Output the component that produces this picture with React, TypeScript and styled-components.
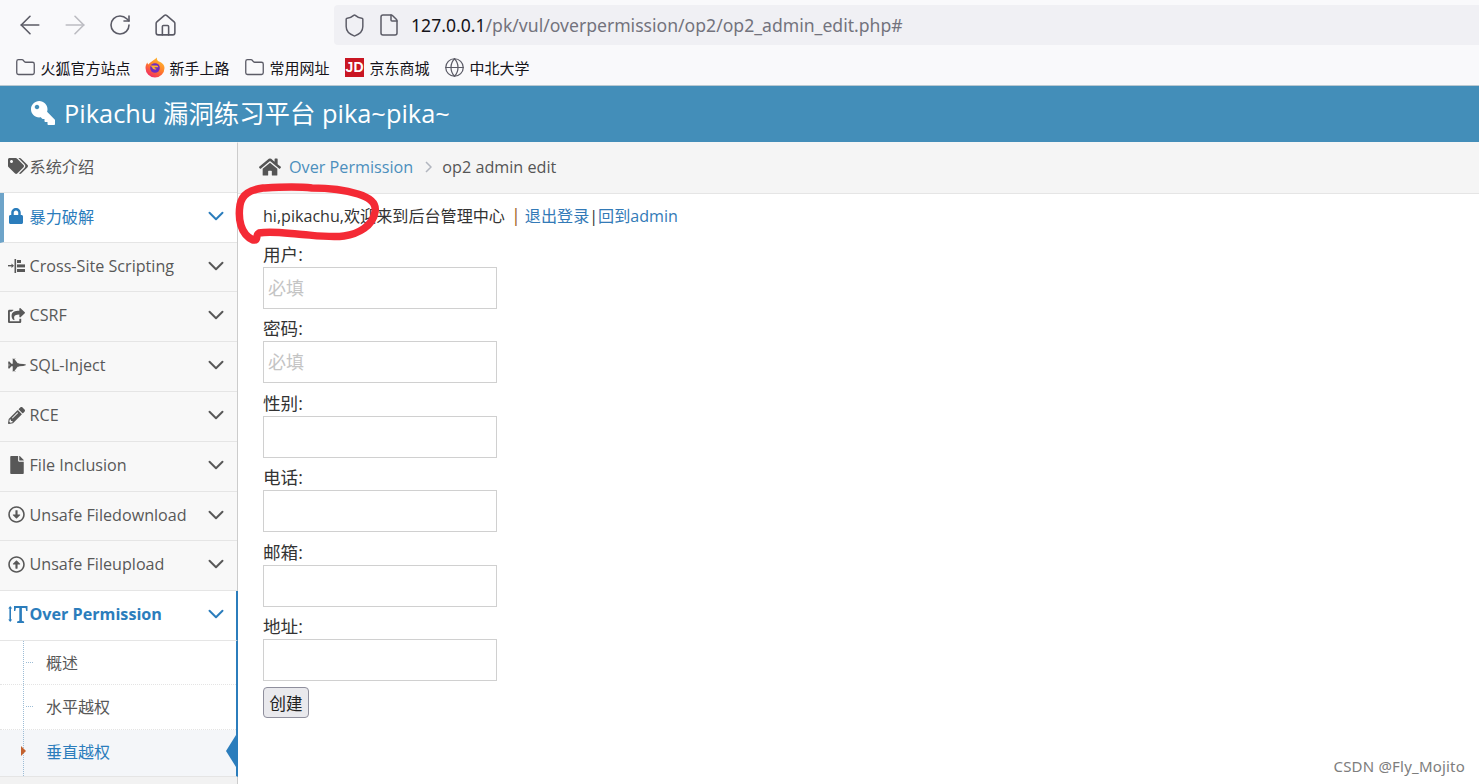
import React from "react";
import styled, { createGlobalStyle } from "styled-components";
import { ArrowLeft, ArrowRight, RotateCw, Home, Shield, File, Folder, Globe, ChevronDown } from "lucide-react";
import {
  FaTags, FaLock, FaShareSquare, FaFighterJet, FaPencilAlt, FaFile,
  FaRegArrowAltCircleDown, FaRegArrowAltCircleUp, FaHome, FaKey,
} from "react-icons/fa";

const SANS = `"Open Sans", "Noto Sans CJK SC", sans-serif`;

const Global = createGlobalStyle`
  html, body { margin: 0; padding: 0; background: #fff; overflow: hidden; }
  body { font-family: ${SANS}; width: 1479px; height: 784px; }
  * { box-sizing: border-box; }
`;

const Page = styled.div`
  position: relative;
  width: 1479px;
  height: 784px;
  display: flex;
  flex-direction: column;
  overflow: hidden;
`;

const Chrome = styled.header`
  height: 86px;
  flex: none;
  background: #f9f9fb;
  border-bottom: 1px solid #b9c9d2;
`;

const NavRow = styled.div`
  height: 51px;
  padding-top: 5px;
  display: flex;
  align-items: flex-start;
`;

const NavButtons = styled.div`
  width: 334px;
  flex: none;
  height: 40px;
  padding-left: 7.5px;
  display: grid;
  grid-template-columns: repeat(4, 45px);
  align-items: center;
  justify-items: center;
`;

const NavIcon = styled.span<{ $off?: boolean }>`
  display: inline-flex;
  color: ${(p) => (p.$off ? "#bcbcc2" : "#5b5b66")};
`;

const UrlBar = styled.div`
  flex: 1;
  height: 40px;
  background: #f0f0f4;
  border-radius: 4px 0 0 4px;
  padding-left: 8px;
  display: flex;
  align-items: center;
  color: #5b5b66;
`;

const UrlIcons = styled.div`
  display: flex;
  align-items: center;
  gap: 10px;
  width: 69px;
  flex: none;
`;

const UrlText = styled.span`
  font-family: "Noto Sans", sans-serif;
  font-size: 17.6px;
  color: #73737d;
  white-space: nowrap;
  b { font-weight: 400; color: #15141a; }
`;

const Bookmarks = styled.div`
  height: 32px;
  padding-left: 15px;
  display: flex;
  align-items: center;
  gap: 14.5px;
`;

const Bookmark = styled.span`
  display: inline-flex;
  align-items: center;
  gap: 4.5px;
  font-size: 15px;
  color: #15141a;
  font-family: "Noto Sans CJK SC", sans-serif;
  svg { color: #5b5b66; flex: none; }
`;

const JdLogo = styled.span`
  width: 19px;
  height: 19px;
  margin: 0 1px;
  background: #c91623;
  color: #fff;
  font: 700 14px/19px "Liberation Sans", sans-serif;
  text-align: center;
  flex: none;
`;

const TopBar = styled.div`
  height: 56px;
  flex: none;
  background: #438eb9;
  color: #fff;
  padding: 0 0 5px 31px;
  display: flex;
  align-items: center;
  gap: 9px;
  font-size: 25.4px;
  svg { transform: scaleX(-1); margin-top: 2px; }
`;

const Body = styled.div`
  flex: 1;
  display: flex;
  min-height: 0;
`;

const Sidebar = styled.nav`
  width: 238px;
  flex: none;
  background: #f2f2f2;
  border-right: 1px solid #ccc;
  border-top: 1px solid #f8f8f8;
`;

const Item = styled.div<{ $active?: boolean; $bar?: string; $bold?: boolean }>`
  height: 49.8px;
  padding: 0 8.5px 2.6px ${(p) => (p.$bar ? "4px" : "8px")};
  display: flex;
  align-items: center;
  background: ${(p) => (p.$active ? "#fff" : "#f8f8f8")};
  border-bottom: 1px solid #e5e5e5;
  border-left: ${(p) => (p.$bar ? `4px solid ${p.$bar}` : "none")};
  color: ${(p) => (p.$active ? "#2b7dbc" : "#585858")};
  font-size: 16.15px;
  font-weight: ${(p) => (p.$bold ? 700 : 400)};
  position: relative;
`;

const ItemIcon = styled.span`
  width: 21.5px;
  flex: none;
  display: inline-flex;
  align-items: center;
`;

const ItemLabel = styled.span`
  flex: 1;
  white-space: nowrap;
`;

const SubGroup = styled.div`
  position: relative;
  margin-right: -1px;
  border-right: 2px solid #2b7dbc;
  height: 136px;
  background: #fff;
  border-bottom: 1px solid #e5e5e5;
  &::before {
    content: "";
    position: absolute;
    z-index: 1;
    left: 23px;
    top: 0;
    bottom: 0;
    border-left: 1px dotted #9dbdd6;
  }
`;

const OverItem = styled(Item)`
  margin-right: -1px;
  border-right: 2px solid #2b7dbc;
  padding-right: 7.5px;
`;

const SubItem = styled.div<{ $active?: boolean }>`
  height: ${(p) => (p.$active ? "46px" : "44.5px")};
  padding: 0 0 ${(p) => (p.$active ? "3px" : "2px")} 46px;
  display: flex;
  align-items: center;
  font-size: 16px;
  color: ${(p) => (p.$active ? "#2b7dbc" : "#585858")};
  background: ${(p) => (p.$active ? "#f4f6f9" : "#fff")};
  border-bottom: ${(p) => (p.$active ? "none" : "1px dotted #e4e4e4")};
  position: relative;
  &::before {
    content: "";
    position: absolute;
    display: ${(p) => (p.$active ? "none" : "block")};
    left: 26px;
    top: 21px;
    width: 7px;
    border-top: 1px dotted #9dbdd6;
  }
`;

const Caret = styled.span`
  position: absolute;
  z-index: 2;
  left: 21px;
  top: 16px;
  border-left: 5px solid #c4622f;
  border-top: 5px solid transparent;
  border-bottom: 5px solid transparent;
`;

const Pointer = styled.span`
  position: absolute;
  right: 0;
  top: 5px;
  border-right: 10px solid #2b7dbc;
  border-top: 16px solid transparent;
  border-bottom: 16px solid transparent;
`;

const Main = styled.main`
  flex: 1;
  min-width: 0;
`;

const Breadcrumb = styled.div`
  height: 52px;
  background: #f5f5f5;
  border-bottom: 1px solid #e5e5e5;
  padding: 0 0 2px 21px;
  display: flex;
  align-items: center;
  font-size: 16.2px;
  color: #555;
  svg.home { margin-right: 8px; }
`;

const CrumbLink = styled.a`
  color: #4c8fbd;
`;

const CrumbSep = styled.span`
  margin: 0 10px 0 12px;
  color: #b2b6bf;
  font-size: 16px;
  display: inline-flex;
`;

const Content = styled.div`
  padding: 11px 0 0 25px;
  font-size: 16.1px;
  color: #333;
`;

const Welcome = styled.p`
  margin: 0 0 18px;
  height: 22px;
  line-height: 22px;
  white-space: nowrap;
  a { color: #337ab7; }
  i { font-style: normal; color: #a0621f; margin: 0 4px 0 6px; font-size: 18px; line-height: 0; }
`;

const Field = styled.div`
  height: 74.4px;
  display: flex;
  flex-direction: column;
`;

const FieldLabel = styled.label`
  height: 21px;
  line-height: 19px;
  margin-bottom: 1px;
  color: #333;
  font-size: 17.6px;
`;

const Input = styled.input`
  width: 234px;
  height: 42px;
  border: 1px solid #d0d0d0;
  padding: 0 4px;
  font: 18px ${SANS};
  background: #fff;
  outline: none;
  &::placeholder { color: #c4c4c4; opacity: 1; }
`;

const Submit = styled.button`
  display: block;
  width: 46px;
  height: 31px;
  margin-top: -4px;
  padding: 0;
  background: #e9e9ed;
  border: 1px solid #8f8f9d;
  border-radius: 4px;
  color: #222;
  font: 16.5px ${SANS};
`;

const Scribble = styled.svg`
  position: absolute;
  left: 0;
  top: 0;
  pointer-events: none;
`;

const Watermark = styled.span`
  position: absolute;
  right: 14px;
  bottom: 8px;
  font: 15px "Noto Sans", sans-serif;
  color: #7d7d7d;
  letter-spacing: 0.2px;
`;

const Chevron = () => <ChevronDown size={26} strokeWidth={1.8} />;

const StackIcon = () => (
  <svg width="18" height="16" viewBox="0 0 18 16" fill="currentColor">
    <rect x="0" y="7" width="5" height="1.4" />
    <path d="M3.5 5.4 6 7.7 3.5 10z" />
    <rect x="6.5" y="1" width="1.6" height="14" />
    <rect x="9" y="2" width="4" height="3" />
    <rect x="9" y="6.4" width="8" height="3" />
    <rect x="9" y="11" width="8" height="3" />
  </svg>
);

const TextHeightIcon = () => (
  <svg width="20" height="19" viewBox="0 0 20 19" fill="currentColor">
    <path d="M2.2 1 4.2 3.5H3v11h1.200L2.200 17 .2 14.500H1.400v-11H.2z" />
    <path d="M6 1h13.500v5h-1.300l-.6-2.900h-3.700v12.700l2.200.6V18H9.100v-1.600l2.200-.6V3.100H7.900l-.6 2.900H6z" />
  </svg>
);

const FirefoxLogo = () => (
  <svg width="20" height="21" viewBox="0 0 20 21">
    <defs>
      <linearGradient id="ff" x1="0.8" y1="0" x2="0.2" y2="1">
        <stop offset="0" stopColor="#ffc52e" />
        <stop offset="0.5" stopColor="#ff7a2b" />
        <stop offset="1" stopColor="#f0246a" />
      </linearGradient>
    </defs>
    <path d="M10 20.500a9.500 9.500 0 0 1-9.500-9.500c0-2.200.7-4 1.800-5.500.2 1 .6 1.700 1 2.100C4.800 5.200 8 4 12 .5c-.5 2.200.6 3.400 2 4 3 1.300 5.500 3 5.500 6.500a9.500 9.500 0 0 1-9.500 9.500z" fill="url(#ff)" />
    <circle cx="10" cy="11" r="4.800" fill="#6f2bc0" />
    <path d="M5.500 8.500h6c1.200 0 1.800 1 1.800 1.800H9.500c0 1.100.9 1.600 2.200 1.400-.9 1.400-4 1.100-4.500-1.100z" fill="#ffb02e" />
  </svg>
);

const menu = [
  { label: "Cross-Site Scripting", icon: <StackIcon /> },
  { label: "CSRF", icon: <FaShareSquare size={17} /> },
  { label: "SQL-Inject", icon: <FaFighterJet size={18} /> },
  { label: "RCE", icon: <FaPencilAlt size={17} /> },
  { label: "File Inclusion", icon: <FaFile size={18} /> },
  { label: "Unsafe Filedownload", icon: <FaRegArrowAltCircleDown size={17} /> },
  { label: "Unsafe Fileupload", icon: <FaRegArrowAltCircleUp size={17} /> },
];

const fields = [
  { label: "用户:", placeholder: "必填" },
  { label: "密码:", placeholder: "必填" },
  { label: "性别:" },
  { label: "电话:" },
  { label: "邮箱:" },
  { label: "地址:" },
];

export default function App() {
  return (
    <Page>
      <Global />
      <Chrome>
        <NavRow>
          <NavButtons>
            <NavIcon><ArrowLeft size={30} strokeWidth={1.3} /></NavIcon>
            <NavIcon $off><ArrowRight size={30} strokeWidth={1.3} /></NavIcon>
            <NavIcon><RotateCw size={24} strokeWidth={1.6} /></NavIcon>
            <NavIcon><Home size={25} strokeWidth={1.5} /></NavIcon>
          </NavButtons>
          <UrlBar>
            <UrlIcons>
              <Shield size={25} strokeWidth={1.4} />
              <File size={24} strokeWidth={1.5} />
            </UrlIcons>
            <UrlText><b>127.0.0.1</b>/pk/vul/overpermission/op2/op2_admin_edit.php#</UrlText>
          </UrlBar>
        </NavRow>
        <Bookmarks>
          <Bookmark><Folder size={21} strokeWidth={1.5} />火狐官方站点</Bookmark>
          <Bookmark><FirefoxLogo />新手上路</Bookmark>
          <Bookmark><Folder size={21} strokeWidth={1.5} />常用网址</Bookmark>
          <Bookmark><JdLogo>JD</JdLogo>京东商城</Bookmark>
          <Bookmark><Globe size={21} strokeWidth={1.4} />中北大学</Bookmark>
        </Bookmarks>
      </Chrome>
      <TopBar>
        <FaKey size={24} />
        <span>Pikachu 漏洞练习平台 pika~pika~</span>
      </TopBar>
      <Body>
        <Sidebar>
          <Item>
            <ItemIcon><FaTags size={20} /></ItemIcon>
            <ItemLabel>系统介绍</ItemLabel>
          </Item>
          <Item $active $bar="#6ea4c9">
            <ItemIcon><FaLock size={16} /></ItemIcon>
            <ItemLabel>暴力破解</ItemLabel>
            <Chevron />
          </Item>
          {menu.map((m) => (
            <Item key={m.label}>
              <ItemIcon>{m.icon}</ItemIcon>
              <ItemLabel>{m.label}</ItemLabel>
              <Chevron />
            </Item>
          ))}
          <OverItem $active $bold>
            <ItemIcon><TextHeightIcon /></ItemIcon>
            <ItemLabel>Over Permission</ItemLabel>
            <Chevron />
          </OverItem>
          <SubGroup>
            <SubItem>概述</SubItem>
            <SubItem>水平越权</SubItem>
            <SubItem $active>
              <Caret />
              垂直越权
              <Pointer />
            </SubItem>
          </SubGroup>
        </Sidebar>
        <Main>
          <Breadcrumb>
            <FaHome className="home" size={22} />
            <CrumbLink>Over Permission</CrumbLink>
            <CrumbSep>
              <svg width="7" height="12" viewBox="0 0 7 12" fill="none" stroke="currentColor" strokeWidth="1.5"><path d="M1 1l5 5-5 5" /></svg>
            </CrumbSep>
            <span>op2 admin edit</span>
          </Breadcrumb>
          <Content>
            <Welcome>
              hi,pikachu,欢迎来到后台管理中心<i>|</i><a>退出登录</a>|<a>回到admin</a>
            </Welcome>
            {fields.map((f) => (
              <Field key={f.label}>
                <FieldLabel>{f.label}</FieldLabel>
                <Input placeholder={f.placeholder} />
              </Field>
            ))}
            <Submit>创建</Submit>
          </Content>
        </Main>
      </Body>
      <Scribble width="1479" height="784" viewBox="0 0 1479 784">
        <path
          d="M375 212 C377 202 368 197 358 194 C342 189 325 188 312 188 C295 186 280 187 263 188 C250 190 242 194 240 205 C238 218 240 234 253 240 C259 241 255 235 259 233 C270 231 285 233 297 234 C312 235 330 238 344 236 C358 234 373 226 375 212"
          fill="none"
          stroke="#f42a35"
          strokeWidth="7.5"
          strokeLinecap="round"
        />
      </Scribble>
      <Watermark>CSDN @Fly_Mojito</Watermark>
    </Page>
  );
}
